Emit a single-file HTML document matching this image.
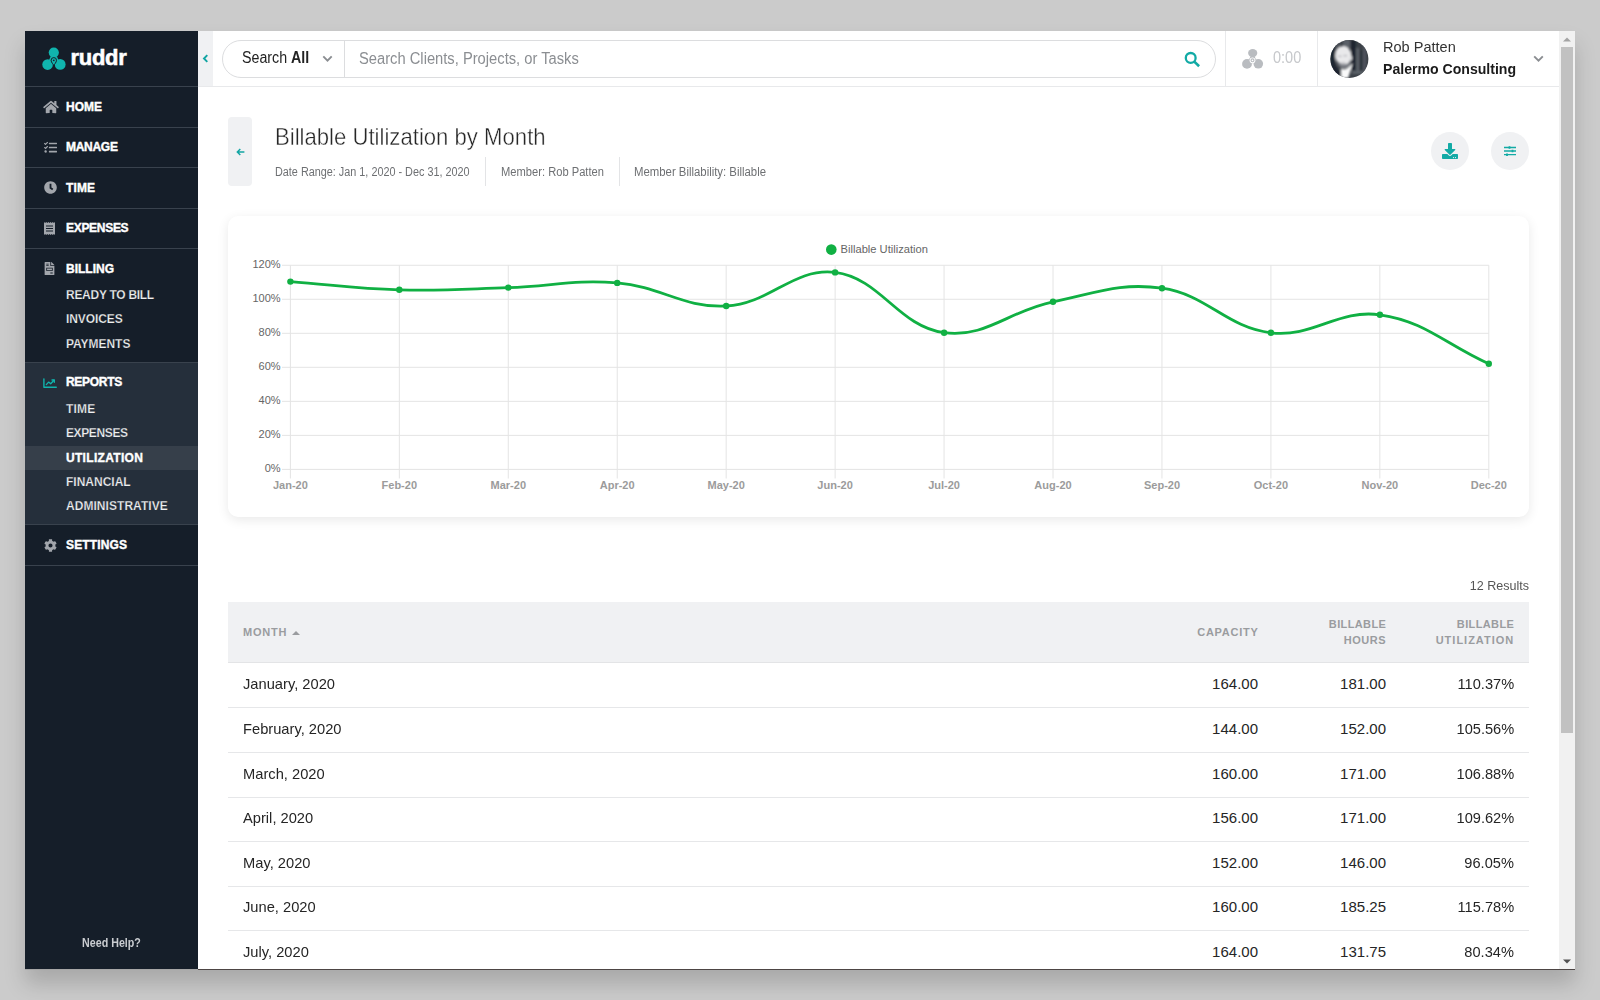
<!DOCTYPE html>
<html lang="en">
<head>
<meta charset="utf-8">
<title>Billable Utilization by Month - Ruddr</title>
<style>
*{box-sizing:border-box;margin:0;padding:0}
html,body{width:1600px;height:1000px;overflow:hidden;background:#cbcbcb;font-family:"Liberation Sans",sans-serif;}
#frame{position:absolute;left:25px;top:31px;width:1550px;height:939px;background:#fff;box-shadow:0 14px 20px rgba(0,0,0,.17);overflow:hidden;}
#abs{position:absolute;left:-25px;top:-31px;width:1600px;height:1000px;}
#abs div,#abs span,#abs svg,#abs h1{position:absolute;}
/* ---------- sidebar ---------- */
#side{left:25px;top:31px;width:173px;height:938px;background:#151e29;}
.hl{left:25px;width:173px;height:1px;background:#39424d;}
#word{left:70.500px;top:45px;font-size:22px;font-weight:bold;letter-spacing:-.3px;line-height:26px;color:#fff;-webkit-text-stroke:.55px #fff;}
.t{left:66px;font-size:12px;font-weight:bold;line-height:14px;color:#fff;-webkit-text-stroke:.4px #fff;white-space:nowrap;}
.s{left:66px;font-size:12px;font-weight:bold;line-height:14px;color:#f0f1f2;white-space:nowrap;}
#help{left:25px;width:173px;top:936px;text-align:center;font-size:12px;font-weight:bold;color:#c9ccd0;line-height:14px;transform:scaleX(.89);}
/* ---------- top bar ---------- */
#collapse{left:198px;top:31px;width:15px;height:55px;background:#f0f1f3;}
#topline{left:198px;top:86px;width:1361px;height:1px;background:#e8e9eb;}
#pill{left:222px;top:40px;width:994px;height:38px;border:1px solid #dcdddf;border-radius:19px;background:#fff;}
#sa{left:242px;top:48px;font-size:16px;line-height:20px;color:#222;white-space:nowrap;}
#sa b{position:static;font-weight:bold;}
#pdv{left:344px;top:41px;width:1px;height:36px;background:#dcdddf;}
#ph{left:359px;top:49px;font-size:16px;line-height:20px;color:#8b8e92;white-space:nowrap;}
.vd{top:31px;width:1px;height:55px;background:#e8e9eb;}
#timer{left:1273px;top:48px;font-size:16px;line-height:20px;color:#c6c8cb;}
#uname{left:1383px;top:38px;font-size:15px;line-height:18px;color:#333;white-space:nowrap;}
#ucomp{left:1383px;top:60px;font-size:15px;line-height:18px;color:#1b1b1b;font-weight:bold;white-space:nowrap;}
/* ---------- scrollbar ---------- */
#sb{left:1559px;top:31px;width:16px;height:939px;background:#f1f1f1;}
#sbt{left:1561px;top:47px;width:12px;height:686px;background:#c1c1c1;}
/* ---------- page ---------- */
#back{left:228px;top:117px;width:24px;height:69px;background:#f0f1f3;border-radius:4px;}
h1{left:275px;top:122px;font-size:24px;font-weight:normal;color:#262626;-webkit-text-stroke:.4px #fff;line-height:30px;white-space:nowrap;}
.flt{top:165px;font-size:12px;line-height:14px;color:#6e7073;white-space:nowrap;}
.fdv{top:157px;width:1px;height:29px;background:#e3e4e6;}
.cbtn{top:132px;width:38px;height:38px;border-radius:50%;background:#f0f1f3;}
#card{left:228px;top:216px;width:1301px;height:301px;border-radius:10px;background:#fff;box-shadow:0 3px 12px rgba(0,0,0,.09);}
#results{left:1400px;width:129px;text-align:right;top:578px;font-size:13px;line-height:16px;color:#555;}
#thead{left:228px;top:602px;width:1301px;height:61px;background:#f0f1f3;border-bottom:1px solid #e3e4e6;}
.th{font-size:11px;font-weight:bold;line-height:16px;color:#9a9c9f;text-align:right;white-space:nowrap;}
.rl{left:228px;width:1301px;height:1px;background:#e6e7e9;}
.c{font-size:15px;line-height:18px;color:#252525;white-space:nowrap;}
.r{text-align:right;}
</style>
</head>
<body>
<div id="frame"><div id="abs">
<!-- SIDEBAR -->
<div id="side"></div>
<div id="rep" style="left:25px;top:363px;width:173px;height:161px;background:#252f3b"></div>
<div id="on" style="left:25px;top:446px;width:173px;height:24px;background:#363f4a"></div>
<svg style="left:42px;top:47px" width="25" height="24" viewBox="0 0 25 24"><g fill="#10b5ae"><circle cx="11.8" cy="5.6" r="5.1"/><circle cx="5.6" cy="17.6" r="5.3"/><circle cx="18.2" cy="17.4" r="5.4"/><path d="M8.6 9.5h6.400l2 4.800-5 3.200-5.400-3.400z"/></g><path d="M11.800 10.600a2.700 2.700 0 0 1 2.700 2.700c0 2-2.700 4.900-2.700 4.900s-2.700-2.900-2.700-4.900a2.700 2.700 0 0 1 2.700-2.700z" fill="#10b5ae" stroke="#151e29" stroke-width="1"/><circle cx="11.800" cy="13.300" r=".9" fill="#151e29"/></svg>
<span id="word">ruddr</span>
<div class="hl" style="top:86px"></div>
<svg style="left:43px;top:100px" width="16" height="14" viewBox="0 0 576 512"><path fill="#a2a6ac" d="M280.370 148.260L96 300.110V464a16 16 0 0 0 16 16l112.060-.290a16 16 0 0 0 15.920-16V368a16 16 0 0 1 16-16h64a16 16 0 0 1 16 16v95.640a16 16 0 0 0 16 16.050L464 480a16 16 0 0 0 16-16V300L295.670 148.260a12.190 12.190 0 0 0-15.300 0zM571.600 251.470L488 182.560V44.050a12 12 0 0 0-12-12h-56a12 12 0 0 0-12 12v72.610L318.470 43a48 48 0 0 0-61 0L4.340 251.470a12 12 0 0 0-1.600 16.900l25.500 31A12 12 0 0 0 45.150 301l235.220-193.740a12.190 12.190 0 0 1 15.300 0L530.900 301a12 12 0 0 0 16.900-1.600l25.500-31a12 12 0 0 0-1.700-16.930z"/></svg>
<span class="t" style="top:100px">HOME</span>
<div class="hl" style="top:127px"></div>
<svg style="left:44px;top:141px" width="13" height="13" viewBox="0 0 512 512"><path fill="#a2a6ac" d="M139.610 35.500a12 12 0 0 0-17 0L58.930 98.810l-22.700-22.120a12 12 0 0 0-17 0L3.530 92.410a12 12 0 0 0 0 17l47.590 47.400a12.780 12.780 0 0 0 17.610 0l15.590-15.620L156.520 69a12.090 12.090 0 0 0 .090-17zm0 159.190a12 12 0 0 0-17 0l-63.680 63.720-22.700-22.100a12 12 0 0 0-17 0L3.530 252a12 12 0 0 0 0 17L51 316.500a12.770 12.770 0 0 0 17.600 0l15.700-15.690 72.200-72.220a12 12 0 0 0 .090-16.900zM64 368c-26.490 0-48.590 21.500-48.590 48S37.530 464 64 464a48 48 0 0 0 0-96zm432 16H208a16 16 0 0 0-16 16v32a16 16 0 0 0 16 16h288a16 16 0 0 0 16-16v-32a16 16 0 0 0-16-16zm0-320H208a16 16 0 0 0-16 16v32a16 16 0 0 0 16 16h288a16 16 0 0 0 16-16V80a16 16 0 0 0-16-16zm0 160H208a16 16 0 0 0-16 16v32a16 16 0 0 0 16 16h288a16 16 0 0 0 16-16v-32a16 16 0 0 0-16-16z"/></svg>
<span class="t" style="top:140px;letter-spacing:-.28px">MANAGE</span>
<div class="hl" style="top:167px"></div>
<svg style="left:44px;top:181px" width="13" height="13" viewBox="0 0 512 512"><path fill="#a2a6ac" d="M256 8C119 8 8 119 8 256s111 248 248 248 248-111 248-248S393 8 256 8zm57.100 350.100L224.900 294c-3.100-2.300-4.900-5.900-4.900-9.700V116c0-6.600 5.400-12 12-12h48c6.600 0 12 5.400 12 12v137.700l63.500 46.200c5.400 3.900 6.500 11.400 2.600 16.800l-28.200 38.800c-3.900 5.300-11.400 6.500-16.800 2.600z"/></svg>
<span class="t" style="top:181px;letter-spacing:.15px">TIME</span>
<div class="hl" style="top:208px"></div>
<svg style="left:43.500px;top:222px" width="11" height="13" viewBox="0 0 11 13"><path fill="#a2a6ac" d="M0 0l1.100.9L2.200 0l1.100.9L4.400 0l1.100.9L6.600 0l1.100.9L8.800 0l1.100.9L11 0v13l-1.100-.9-1.100.9-1.100-.9-1.100.9-1.100-.9-1.100.9-1.100-.9-1.100.9-1.100-.9L0 13z"/><path stroke="#151e29" stroke-width="1.100" d="M2 4h7M2 6.500h7M2 9h7"/></svg>
<span class="t" style="top:221px;letter-spacing:-.3px">EXPENSES</span>
<div class="hl" style="top:248px"></div>
<svg style="left:43.500px;top:262px" width="11" height="13" viewBox="0 0 384 512"><path fill="#a2a6ac" d="M288 256H96v64h192v-64zm89-151L279.100 7c-4.500-4.500-10.600-7-17-7H256v128h128v-6.100c0-6.300-2.500-12.400-7-16.900zm-153 31V0H24C10.700 0 0 10.700 0 24v464c0 13.300 10.700 24 24 24h336c13.300 0 24-10.700 24-24V160H248c-13.200 0-24-10.800-24-24zM64 72c0-4.420 3.580-8 8-8h80c4.420 0 8 3.580 8 8v16c0 4.420-3.580 8-8 8H72c-4.420 0-8-3.580-8-8V72zm0 64c0-4.420 3.580-8 8-8h80c4.420 0 8 3.580 8 8v16c0 4.420-3.580 8-8 8H72c-4.420 0-8-3.580-8-8v-16zm256 304c0 4.420-3.580 8-8 8h-80c-4.420 0-8-3.580-8-8v-16c0-4.420 3.580-8 8-8h80c4.420 0 8 3.580 8 8v16zm0-200v96c0 8.840-7.160 16-16 16H80c-8.840 0-16-7.160-16-16v-96c0-8.840 7.160-16 16-16h224c8.840 0 16 7.160 16 16z"/></svg>
<span class="t" style="top:262px;letter-spacing:.0px">BILLING</span>
<span class="s" style="-webkit-text-stroke:.25px #151e29;top:288px;letter-spacing:-.28px">READY TO BILL</span>
<span class="s" style="-webkit-text-stroke:.25px #151e29;top:312px;letter-spacing:-.08px">INVOICES</span>
<span class="s" style="-webkit-text-stroke:.25px #151e29;top:337px;letter-spacing:-.04px">PAYMENTS</span>
<div class="hl" style="top:362px"></div>
<svg style="left:43px;top:377.500px" width="14" height="10" viewBox="0 0 14 10"><g fill="none" stroke="#10b5ae" stroke-width="1.350" stroke-linecap="round" stroke-linejoin="round"><path d="M.9.800v8.400h12.400"/><path d="M3.300 6.600l2.300-2.500 2.100 1.700 3.300-3.500"/><path d="M9 2h2.300v2.300"/></g></svg>
<span class="t" style="top:375px;letter-spacing:-.3px">REPORTS</span>
<span class="s" style="-webkit-text-stroke:.25px #252f3b;top:402px;letter-spacing:.18px">TIME</span>
<span class="s" style="-webkit-text-stroke:.25px #252f3b;top:426px;letter-spacing:-.38px">EXPENSES</span>
<span class="s" style="top:451px;letter-spacing:.31px;color:#fff;-webkit-text-stroke:.35px #fff">UTILIZATION</span>
<span class="s" style="-webkit-text-stroke:.25px #252f3b;top:475px">FINANCIAL</span>
<span class="s" style="-webkit-text-stroke:.25px #252f3b;top:499px;letter-spacing:.05px">ADMINISTRATIVE</span>
<div class="hl" style="top:524px"></div>
<svg style="left:44px;top:538.500px" width="13" height="13" viewBox="0 0 512 512"><path fill="#a2a6ac" d="M487.400 315.700l-42.600-24.600c4.300-23.200 4.300-47 0-70.200l42.600-24.600c4.900-2.800 7.100-8.600 5.500-14-11.100-35.600-30-67.800-54.700-94.600-3.800-4.100-10-5.100-14.800-2.300L380.800 110c-17.900-15.400-38.500-27.300-60.800-35.100V25.800c0-5.600-3.900-10.500-9.400-11.700-36.700-8.200-74.300-7.800-109.200 0-5.500 1.200-9.400 6.100-9.400 11.700V75c-22.200 7.900-42.800 19.800-60.800 35.100L88.700 85.500c-4.900-2.800-11-1.900-14.800 2.300-24.700 26.700-43.600 58.900-54.700 94.600-1.700 5.400.6 11.200 5.500 14L67.300 221c-4.300 23.200-4.300 47 0 70.200l-42.600 24.600c-4.900 2.800-7.100 8.600-5.500 14 11.100 35.600 30 67.800 54.700 94.600 3.800 4.100 10 5.100 14.800 2.300l42.600-24.600c17.900 15.400 38.500 27.300 60.800 35.100v49.200c0 5.600 3.900 10.500 9.400 11.700 36.700 8.200 74.300 7.800 109.200 0 5.500-1.200 9.400-6.100 9.400-11.700v-49.200c22.200-7.900 42.800-19.800 60.800-35.100l42.600 24.600c4.900 2.800 11 1.900 14.800-2.300 24.700-26.700 43.600-58.900 54.700-94.600 1.500-5.500-.7-11.300-5.600-14.100zM256 336c-44.100 0-80-35.900-80-80s35.900-80 80-80 80 35.900 80 80-35.900 80-80 80z"/></svg>
<span class="t" style="top:538px;letter-spacing:.14px">SETTINGS</span>
<div class="hl" style="top:565px"></div>
<span id="help">Need Help?</span>
<!-- TOP BAR -->
<div id="collapse"></div>
<svg style="left:202px;top:54px" width="7" height="9" viewBox="0 0 7 9"><path d="M5.300 1.200L2 4.500l3.300 3.300" fill="none" stroke="#12a5a3" stroke-width="1.900"/></svg>
<div id="topline"></div>
<div id="pill"></div>
<span id="sa" style="transform:scaleX(.89);transform-origin:0 0">Search <b>All</b></span>
<svg style="left:322px;top:55px" width="11" height="8" viewBox="0 0 11 8"><path d="M1.300 1.400l4.200 4.200 4.200-4.200" fill="none" stroke="#8a8d91" stroke-width="1.900"/></svg>
<div id="pdv"></div>
<span id="ph" style="transform:scaleX(.92);transform-origin:0 0">Search Clients, Projects, or Tasks</span>
<svg style="left:1184px;top:51px" width="17" height="17" viewBox="0 0 17 17"><circle cx="6.700" cy="6.900" r="4.900" fill="none" stroke="#12aaa5" stroke-width="2.300"/><path d="M10.300 10.600l4.800 4.700" stroke="#12aaa5" stroke-width="2.600" stroke-linecap="butt"/></svg>
<div class="vd" style="left:1225px"></div>
<svg style="left:1241px;top:48px" width="23" height="22" viewBox="0 0 23 22"><g fill="#b9bcc0"><ellipse cx="11.700" cy="5.100" rx="4.600" ry="4.200"/><circle cx="6" cy="15.900" r="4.900"/><circle cx="17.300" cy="15.800" r="4.800"/><path d="M9.500 8.500h4.200l1.500 3.500-3.700 3.500-3.800-3.400z"/></g><circle cx="11.500" cy="12.300" r="2.900" fill="#fff"/><circle cx="11.500" cy="12.300" r="1.450" fill="#fff" stroke="#b9bcc0" stroke-width="1.100"/></svg>
<span id="timer" style="transform:scaleX(.907);transform-origin:0 0">0:00</span>
<div class="vd" style="left:1317px"></div>
<svg style="left:1330px;top:40px" width="39" height="38" viewBox="0 0 39 38"><defs><clipPath id="avc"><circle cx="19.400" cy="19" r="19"/></clipPath><filter id="avb" x="-20%" y="-20%" width="140%" height="140%"><feGaussianBlur stdDeviation=".8"/></filter></defs><g clip-path="url(#avc)"><rect width="39" height="38" fill="#3b4047"/><g filter="url(#avb)"><path d="M0 0h5v38H0z" fill="#1e2630"/><path d="M5 0h5v12H5z" fill="#4a4f56"/><path d="M13 0h7v8h-7z" fill="#5a6068"/><path d="M21 0h4.500v30H21z" fill="#1c242e"/><path d="M26.500 8h2.500v24h-2.500z" fill="#5e646c"/><path d="M30 10h2.500v22H30z" fill="#2a313a"/><path d="M33 6h3v26h-3z" fill="#4f555d"/><path d="M22 31h12v3H22z" fill="#5a6068"/><path d="M3 22l7 10 1 6H3z" fill="#1b232d"/><ellipse cx="13.200" cy="15.800" rx="8" ry="9.800" fill="#e9e9eb"/><ellipse cx="21" cy="18" rx="1.400" ry="2.600" fill="#d9d9dc"/><path d="M6.300 19c.7 5.500 3.800 9.300 7.600 9.300 3.500 0 6.300-2.800 7.300-7.800-1.700 2.500-4 3.600-6.800 3.600-3.300 0-6.200-1.800-8.100-5.100z" fill="#7d8087"/><ellipse cx="13.300" cy="23" rx="2.600" ry="1.300" fill="#c9c9cd"/><path d="M8 16.300h3.500M13.500 15.700h3.500" stroke="#b4b5ba" stroke-width="1.200"/><path d="M10.800 28.500l.6 9.500h6.800l4.600-15-4.400 4.200c-2.500 2.200-5 2.600-7.600 1.300z" fill="#fafafa"/></g></g></svg>
<span id="uname" style="transform:scaleX(.969);transform-origin:0 0">Rob Patten</span>
<span id="ucomp" style="transform:scaleX(.939);transform-origin:0 0">Palermo Consulting</span>
<svg style="left:1533px;top:55px" width="11" height="8" viewBox="0 0 11 8"><path d="M1.200 1.300l4.300 4.300 4.300-4.300" fill="none" stroke="#8a8d91" stroke-width="1.900"/></svg>
<!-- SCROLLBAR -->
<div id="sb"></div>
<div id="sbt"></div>
<svg style="left:1563px;top:37px" width="8" height="5" viewBox="0 0 8 5"><path d="M0 4.500L4 .5l4 4z" fill="#a3a3a3"/></svg>
<svg style="left:1563px;top:959px" width="8" height="5" viewBox="0 0 8 5"><path d="M0 .5l4 4 4-4z" fill="#505050"/></svg>
<div style="left:198px;top:969px;width:1377px;height:1px;background:#4d4544"></div><div style="left:25px;top:969px;width:173px;height:1px;background:#a6a6a6"></div>
<!-- PAGE HEADER -->
<div id="back"></div>
<svg style="left:236px;top:147.500px" width="9" height="8" viewBox="0 0 9 8"><path d="M8.400 4H1.600M4.300 1L1.300 4l3 3" fill="none" stroke="#12a5a3" stroke-width="1.450"/></svg>
<h1 style="transform:scaleX(.922);transform-origin:0 0">Billable Utilization by Month</h1>
<span class="flt" style="left:275px;transform:scaleX(.903);transform-origin:0 0">Date Range: Jan 1, 2020 - Dec 31, 2020</span>
<div class="fdv" style="left:485px"></div>
<span class="flt" style="left:501px;transform:scaleX(.93);transform-origin:0 0">Member: Rob Patten</span>
<div class="fdv" style="left:619px"></div>
<span class="flt" style="left:634px;transform:scaleX(.947);transform-origin:0 0">Member Billability: Billable</span>
<div class="cbtn" style="left:1431px"></div>
<svg style="left:1442px;top:143px" width="16" height="16" viewBox="0 0 512 512"><path fill="#12aaa5" d="M216 0h80c13.300 0 24 10.700 24 24v168h87.700c17.800 0 26.700 21.500 14.100 34.100L269.700 378.300c-7.500 7.500-19.800 7.500-27.300 0L90.100 226.100c-12.600-12.600-3.700-34.100 14.100-34.100H192V24c0-13.300 10.700-24 24-24zm296 376v112c0 13.300-10.700 24-24 24H24c-13.300 0-24-10.700-24-24V376c0-13.300 10.700-24 24-24h146.700l49 49c20.100 20.100 52.500 20.100 72.600 0l49-49H488c13.300 0 24 10.700 24 24zm-124 88c0-11-9-20-20-20s-20 9-20 20 9 20 20 20 20-9 20-20zm64 0c0-11-9-20-20-20s-20 9-20 20 9 20 20 20 20-9 20-20z"/></svg>
<div class="cbtn" style="left:1491px"></div>
<svg style="left:1504px;top:145px" width="12" height="12" viewBox="0 0 12 12"><g stroke="#12aaa5" fill="none"><path d="M0 2.500h12M0 6h12M0 9.700h12" stroke-width="1.300"/><path d="M5.500 1.300v2.400M8.500 4.800v2.400M3 8.500v2.400" stroke-width="1.800"/></g></svg>
<!-- CHART -->
<div id="card">
<svg id="chart" width="1301" height="301" viewBox="228 216 1301 301" style="position:absolute;left:0;top:0">
<g stroke="#e4e4e4" stroke-width="1" fill="none">
<path d="M282 265.25H1488.8"/>
<path d="M282 299.27H1488.8"/>
<path d="M282 333.30H1488.8"/>
<path d="M282 367.32H1488.8"/>
<path d="M282 401.35H1488.8"/>
<path d="M282 435.38H1488.8"/>
<path d="M282 469.40H1488.8"/>
<path d="M290.40 265.25V478.5"/>
<path d="M399.35 265.25V478.5"/>
<path d="M508.29 265.25V478.5"/>
<path d="M617.24 265.25V478.5"/>
<path d="M726.18 265.25V478.5"/>
<path d="M835.13 265.25V478.5"/>
<path d="M944.07 265.25V478.5"/>
<path d="M1053.02 265.25V478.5"/>
<path d="M1161.96 265.25V478.5"/>
<path d="M1270.91 265.25V478.5"/>
<path d="M1379.85 265.25V478.5"/>
<path d="M1488.80 265.25V478.5"/>
</g>
<g font-family="Liberation Sans, sans-serif" font-size="11" fill="#666" text-anchor="end">
<text x="280.6" y="268.2">120%</text>
<text x="280.6" y="302.3">100%</text>
<text x="280.6" y="336.3">80%</text>
<text x="280.6" y="370.3">60%</text>
<text x="280.6" y="404.4">40%</text>
<text x="280.6" y="438.4">20%</text>
<text x="280.6" y="472.4">0%</text>
</g>
<g font-family="Liberation Sans, sans-serif" font-size="11" font-weight="bold" fill="#9b9b9b" text-anchor="middle">
<text x="290.4" y="488.5">Jan-20</text>
<text x="399.3" y="488.5">Feb-20</text>
<text x="508.3" y="488.5">Mar-20</text>
<text x="617.2" y="488.5">Apr-20</text>
<text x="726.2" y="488.5">May-20</text>
<text x="835.1" y="488.5">Jun-20</text>
<text x="944.1" y="488.5">Jul-20</text>
<text x="1053.0" y="488.5">Aug-20</text>
<text x="1162.0" y="488.5">Sep-20</text>
<text x="1270.9" y="488.5">Oct-20</text>
<text x="1379.9" y="488.5">Nov-20</text>
<text x="1488.8" y="488.5">Dec-20</text>
</g>
<path d="M290.4 281.6 C334.0 284.9 355.7 288.6 399.3 289.8 C442.9 291.0 464.7 289.0 508.3 287.6 C551.9 286.2 574.1 279.3 617.2 282.9 C661.3 286.6 683.1 308.1 726.2 306.0 C770.3 303.9 793.5 267.3 835.1 272.4 C880.6 278.0 898.4 326.6 944.1 332.7 C985.6 338.3 1008.8 310.9 1053.0 301.8 C1095.9 293.1 1119.9 282.2 1162.0 288.2 C1207.1 294.6 1225.9 327.3 1270.9 332.8 C1313.1 337.9 1338.0 308.8 1379.9 314.8 C1425.1 321.2 1445.2 344.2 1488.8 363.8" fill="none" stroke="#10b043" stroke-width="2.8" stroke-linecap="round" stroke-linejoin="round"/>
<g fill="#10b043">
<circle cx="290.4" cy="281.6" r="3.2"/>
<circle cx="399.3" cy="289.8" r="3.2"/>
<circle cx="508.3" cy="287.6" r="3.2"/>
<circle cx="617.2" cy="282.9" r="3.2"/>
<circle cx="726.2" cy="306.0" r="3.2"/>
<circle cx="835.1" cy="272.4" r="3.2"/>
<circle cx="944.1" cy="332.7" r="3.2"/>
<circle cx="1053.0" cy="301.8" r="3.2"/>
<circle cx="1162.0" cy="288.2" r="3.2"/>
<circle cx="1270.9" cy="332.8" r="3.2"/>
<circle cx="1379.9" cy="314.8" r="3.2"/>
<circle cx="1488.8" cy="363.8" r="3.2"/>
</g>
<circle cx="831.3" cy="249.6" r="5.3" fill="#10b043"/>
<text x="840.6" y="252.8" font-family="Liberation Sans, sans-serif" font-size="11.150" fill="#666">Billable Utilization</text>
</svg>
</div>
<!-- TABLE -->
<span id="results" style="transform:scaleX(.964);transform-origin:100% 0">12 Results</span>
<div id="thead"></div>
<span class="th" style="left:243px;top:624px;letter-spacing:.77px">MONTH</span>
<svg style="left:292px;top:631px" width="8" height="4" viewBox="0 0 8 4"><path d="M0 4l4-4 4 4z" fill="#9a9c9f"/></svg>
<span class="th" style="right:341.500px;top:624px;letter-spacing:.73px">CAPACITY</span>
<span class="th" style="right:213.800px;top:616px;letter-spacing:.37px">BILLABLE</span>
<span class="th" style="right:213.800px;top:632px;letter-spacing:.57px">HOURS</span>
<span class="th" style="right:85.800px;top:616px;letter-spacing:.37px">BILLABLE</span>
<span class="th" style="right:85.800px;top:632px;letter-spacing:.99px">UTILIZATION</span>
<span class="c" style="left:243px;top:675px;transform:scaleX(.979);transform-origin:0 0">January, 2020</span>
<span class="c r" style="right:342px;top:675px;transform:scaleX(1);transform-origin:100% 0">164.00</span>
<span class="c r" style="right:214px;top:675px;transform:scaleX(1);transform-origin:100% 0">181.00</span>
<span class="c r" style="right:86px;top:675px;transform:scaleX(.973);transform-origin:100% 0">110.37%</span>
<span class="c" style="left:243px;top:720px;transform:scaleX(.979);transform-origin:0 0">February, 2020</span>
<span class="c r" style="right:342px;top:720px;transform:scaleX(1);transform-origin:100% 0">144.00</span>
<span class="c r" style="right:214px;top:720px;transform:scaleX(1);transform-origin:100% 0">152.00</span>
<span class="c r" style="right:86px;top:720px;transform:scaleX(.973);transform-origin:100% 0">105.56%</span>
<span class="c" style="left:243px;top:765px;transform:scaleX(.979);transform-origin:0 0">March, 2020</span>
<span class="c r" style="right:342px;top:765px;transform:scaleX(1);transform-origin:100% 0">160.00</span>
<span class="c r" style="right:214px;top:765px;transform:scaleX(1);transform-origin:100% 0">171.00</span>
<span class="c r" style="right:86px;top:765px;transform:scaleX(.973);transform-origin:100% 0">106.88%</span>
<span class="c" style="left:243px;top:809px;transform:scaleX(.979);transform-origin:0 0">April, 2020</span>
<span class="c r" style="right:342px;top:809px;transform:scaleX(1);transform-origin:100% 0">156.00</span>
<span class="c r" style="right:214px;top:809px;transform:scaleX(1);transform-origin:100% 0">171.00</span>
<span class="c r" style="right:86px;top:809px;transform:scaleX(.973);transform-origin:100% 0">109.62%</span>
<span class="c" style="left:243px;top:854px;transform:scaleX(.979);transform-origin:0 0">May, 2020</span>
<span class="c r" style="right:342px;top:854px;transform:scaleX(1);transform-origin:100% 0">152.00</span>
<span class="c r" style="right:214px;top:854px;transform:scaleX(1);transform-origin:100% 0">146.00</span>
<span class="c r" style="right:86px;top:854px;transform:scaleX(.973);transform-origin:100% 0">96.05%</span>
<span class="c" style="left:243px;top:898px;transform:scaleX(.979);transform-origin:0 0">June, 2020</span>
<span class="c r" style="right:342px;top:898px;transform:scaleX(1);transform-origin:100% 0">160.00</span>
<span class="c r" style="right:214px;top:898px;transform:scaleX(1);transform-origin:100% 0">185.25</span>
<span class="c r" style="right:86px;top:898px;transform:scaleX(.973);transform-origin:100% 0">115.78%</span>
<span class="c" style="left:243px;top:943px;transform:scaleX(.979);transform-origin:0 0">July, 2020</span>
<span class="c r" style="right:342px;top:943px;transform:scaleX(1);transform-origin:100% 0">164.00</span>
<span class="c r" style="right:214px;top:943px;transform:scaleX(1);transform-origin:100% 0">131.75</span>
<span class="c r" style="right:86px;top:943px;transform:scaleX(.973);transform-origin:100% 0">80.34%</span>
<div class="rl" style="top:707px"></div>
<div class="rl" style="top:752px"></div>
<div class="rl" style="top:797px"></div>
<div class="rl" style="top:841px"></div>
<div class="rl" style="top:886px"></div>
<div class="rl" style="top:930px"></div>
</div></div>
</body>
</html>
